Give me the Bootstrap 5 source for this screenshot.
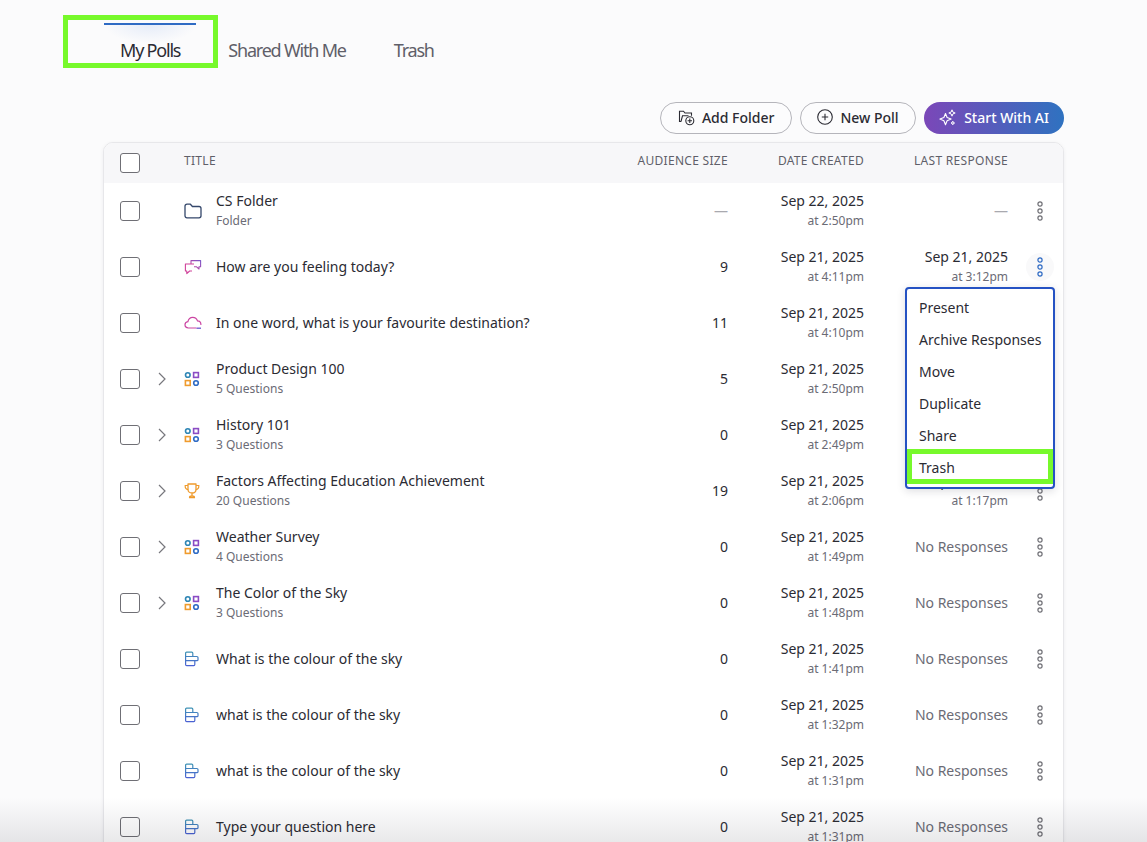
<!DOCTYPE html>
<html lang="en">
<head>
  <meta charset="UTF-8">
  <title>My Polls</title>
  <meta name="viewport" content="width=device-width, initial-scale=1.0">
  <link rel="stylesheet" href="https://cdn.jsdelivr.net/npm/bootstrap@5.3.2/dist/css/bootstrap.min.css">
  <style>
    html, body {
      height: 100%;
      overflow: hidden;
    }
    body {
      background: #fbfbfc;
      color: #2b2b33;
      font-family: "Noto Sans", "Liberation Sans", sans-serif;
      font-size: 14px;
    }
    .page-wrap {
      padding: 23px 83px 0 104px;
    }
    .tab-strip {
      height: 55px;
      gap: 16px;
    }
    .tab-link {
      padding: 12px 16px 0;
      border-top: 2px solid transparent;
      color: #5f5f69;
      font-size: 18px;
      line-height: 27px;
      letter-spacing: -1.2px;
    }
    .tab-link:hover { color: #5f5f69; }
    .tab-link.active {
      color: #2b2b33;
      border-top-color: #2f6bc4;
      background: radial-gradient(ellipse 50% 18px at 50% 0, #e6ecf8, transparent);
    }
    .note-box {
      position: absolute;
      border: 5px solid #77f92b;
      pointer-events: none;
    }
    .note-tab {
      left: -41px;
      top: -8px;
      width: 155px;
      height: 53px;
    }
    .tool-bar {
      margin-top: 24px;
      gap: 8px;
    }
    .pill-btn {
      height: 32px;
      padding: 0 16.5px 2px;
      border: 1px solid #b5b5bb;
      background: #fcfcfd;
      color: #2b2b33;
      font-size: 14px;
      font-weight: 500;
      gap: 7px;
    }
    .pill-ai {
      padding: 0 15px 2px;
      border: 0;
      color: #fff;
      background: linear-gradient(90deg, #7b47b8, #2f72c0);
      gap: 8px;
    }
    .pill-ai:hover { color: #fff; }
    .poll-card {
      margin: 8px 0 0 -1px;
      border: 1px solid #e7e7ea;
      border-radius: 10px;
      background: #fff;
      box-shadow: 0 1px 4px rgba(30, 30, 50, .06);
    }
    .poll-table {
      table-layout: fixed;
      width: 959px;
      margin: 0;
    }
    .poll-table td, .poll-table th {
      padding: 0;
      vertical-align: middle;
      border: 0;
    }
    .poll-table thead th {
      height: 40px;
      padding-bottom: 4px;
      background: #f7f7f9;
      color: #5f5f69;
      font-size: 12px;
      font-weight: 400;
      letter-spacing: .3px;
      text-transform: uppercase;
    }
    .poll-table thead th:first-child { border-top-left-radius: 9px; padding-bottom: 0; }
    .poll-table thead th:last-child { border-top-right-radius: 9px; }
    .poll-table thead th.title-head { padding-left: 33px; }
    .poll-table tbody tr { height: 56px; }
    .poll-table td { color: #2b2b33; font-size: 14px; line-height: 20px; }
    .check-box {
      display: block;
      width: 20px;
      height: 20px;
      margin: 0 0 0 16px;
      border: 1px solid #6f6f75;
      border-radius: 3px;
      background: #fff;
    }
    .sub-text {
      display: block;
      color: #6b6b75;
      font-size: 12px;
      line-height: 20px;
    }
    .poll-table td.muted-dash { color: #a9a9af; }
    .poll-table td.no-resp { color: #6b6b75; }
    .arrow-icon {
      display: block;
      margin-left: 7px;
    }
    .type-icon {
      display: block;
      margin-left: 7px;
    }
    .kebab-btn {
      display: flex;
      align-items: center;
      justify-content: center;
      width: 28px;
      height: 28px;
      margin-left: 18px;
      border-radius: 50%;
      color: #6f6f75;
    }
    .kebab-btn.open {
      background: #f9f9fa;
      color: #2f6bc4;
    }
    .row-menu {
      top: 144px;
      right: 8px;
      left: auto;
      width: 150px;
      min-width: 0;
      height: 202px;
      padding: 3px 0;
      border: 2px solid #2552c3;
      border-radius: 4px;
      box-shadow: 0 2px 8px rgba(30, 30, 50, .15);
    }
    .row-menu .dropdown-item {
      height: 32px;
      padding: 0 12px;
      color: #2b2b33;
      font-size: 14px;
      line-height: 32px;
    }
    .note-item {
      left: 0;
      right: 0;
      top: 160px;
      height: 35px;
    }
    .bottom-fade {
      position: fixed;
      left: 0;
      right: 0;
      bottom: 0;
      height: 44px;
      background: linear-gradient(#fff, #e9e9ea);
      mix-blend-mode: multiply;
      pointer-events: none;
    }
  </style>
</head>
<body>
  <svg width="0" height="0" class="position-absolute">
    <defs>
      <linearGradient id="gradChat" x1="0" y1="1" x2="1" y2="0">
        <stop offset="0" stop-color="#d0429a"/><stop offset="1" stop-color="#7a57c8"/>
      </linearGradient>
      <linearGradient id="gradBars" x1="0" y1="0" x2="0" y2="1">
        <stop offset="0" stop-color="#3f93b5"/><stop offset="1" stop-color="#4a62d2"/>
      </linearGradient>
      <symbol id="iconFolder" viewBox="0 0 18 16">
        <path d="M1 3.200C1 2 1.800 1.200 3 1.200h3.400l2 2.300H15c1.200 0 2 .8 2 2v7.300c0 1.200-.8 2-2 2H3c-1.200 0-2-.8-2-2z" fill="none" stroke="#34476b" stroke-width="1.300" stroke-linejoin="round"/>
      </symbol>
      <symbol id="iconChat" viewBox="0 0 18 16">
        <path d="M7 5V1.600h9.600v6.200h-1.600v2.200l-2.400-2.200H10" fill="none" stroke="url(#gradChat)" stroke-width="1.100" stroke-linejoin="round"/>
        <path d="M10 5H1.400v7h1.400v2.600L5.600 12H8" fill="none" stroke="#d0429a" stroke-width="1.100" stroke-linejoin="round"/>
      </symbol>
      <symbol id="iconCloud" viewBox="0 0 18 16">
        <path d="M12 13H4.400C2.400 13 1 11.500 1 9.800c0-1.600 1.200-3 2.900-3.200C4.500 4 6.500 2.400 8.700 2.400c2.300 0 4.100 1.400 4.800 3.500 1.900.1 3.400 1.600 3.400 3.500" fill="none" stroke="#cb44a2" stroke-width="1.200" stroke-linecap="round"/>
        <path d="M12.500 13.200h4.500" fill="none" stroke="#6a55cf" stroke-width="1.300"/>
      </symbol>
      <symbol id="iconApps" viewBox="0 0 16 16">
        <circle cx="3.800" cy="4" r="2.300" fill="none" stroke="#2f86b5" stroke-width="1.600"/>
        <rect x="9.600" y="1.600" width="4.800" height="4.800" fill="none" stroke="#8b4cc4" stroke-width="1.600"/>
        <rect x="1.400" y="9.600" width="4.800" height="4.800" fill="none" stroke="#ef9b2d" stroke-width="1.600"/>
        <circle cx="12" cy="12" r="2.300" fill="none" stroke="#2f6bc4" stroke-width="1.600"/>
      </symbol>
      <symbol id="iconTrophy" viewBox="0 0 16 16">
        <path d="M4 1h8v5.500C12 8.800 10.300 10 8 10S4 8.800 4 6.500zM8 10v3M5 14.600h6M5.500 14.600c0-1 1-1.600 2.500-1.600s2.500.6 2.500 1.600" fill="none" stroke="#ef9b2d" stroke-width="1.300" stroke-linejoin="round"/>
        <path d="M4 2.500H1.200c-.2 2.500 1 3.900 3 4.200M12 2.500h2.800c.2 2.500-1 3.900-3 4.200" fill="none" stroke="#ef9b2d" stroke-width="1.200"/>
      </symbol>
      <symbol id="iconBars" viewBox="0 0 16 16">
        <path d="M1.600 5.500V2.200c0-.6.400-1 1-1h5.200c.6 0 1 .4 1 1v3.300H1.600zM1.600 5.500h11.300c.7 0 1.100.4 1.100 1v2.200c0 .6-.4 1-1.100 1H1.600zM1.600 9.700h9.200v3.800c0 .7-.4 1.100-1 1.100H2.700c-.7 0-1.100-.4-1.100-1.100z" fill="none" stroke="url(#gradBars)" stroke-width="1.200" stroke-linejoin="round"/>
      </symbol>
      <symbol id="iconKebab" viewBox="0 0 6 20">
        <circle cx="3" cy="3" r="2.100" fill="none" stroke="currentColor" stroke-width="1.200"/>
        <circle cx="3" cy="10" r="2.100" fill="none" stroke="currentColor" stroke-width="1.200"/>
        <circle cx="3" cy="17" r="2.100" fill="none" stroke="currentColor" stroke-width="1.200"/>
      </symbol>
      <symbol id="iconChevron" viewBox="0 0 8 14">
        <path d="M1 1l6 6-6 6" fill="none" stroke="#77777d" stroke-width="1.200"/>
      </symbol>
    </defs>
  </svg>

  <main class="page-wrap">
    <div class="position-relative">
      <nav class="tab-strip d-flex">
        <a class="tab-link active text-decoration-none" href="#">My Polls</a>
        <a class="tab-link text-decoration-none" href="#">Shared With Me</a>
        <a class="tab-link text-decoration-none" href="#">Trash</a>
      </nav>
      <div class="note-box note-tab"></div>
    </div>

    <div class="tool-bar d-flex justify-content-end">
      <button class="btn pill-btn rounded-pill d-flex align-items-center" type="button">
        <svg width="17" height="17" viewBox="0 0 17 17"><path d="M3 12.500H1.500V2.200h4l1.500 1.800h6.500v2.800M3 12.500L4.500 6.800h6" fill="none" stroke="#2b2b33" stroke-width="1.100"/><circle cx="11.800" cy="11.800" r="4" fill="none" stroke="#2b2b33" stroke-width="1.100"/><path d="M11.800 9.600v4.400M9.600 11.800H14" stroke="#2b2b33" stroke-width="1.100"/></svg>
        Add Folder
      </button>
      <button class="btn pill-btn rounded-pill d-flex align-items-center" type="button">
        <svg width="16" height="16" viewBox="0 0 16 16"><circle cx="8" cy="8" r="7.300" fill="none" stroke="#2b2b33" stroke-width="1.100"/><path d="M8 4.800v6.400M4.800 8h6.400" stroke="#2b2b33" stroke-width="1.100"/></svg>
        New Poll
      </button>
      <button class="btn pill-btn pill-ai rounded-pill d-flex align-items-center" type="button">
        <svg width="17" height="17" viewBox="0 0 17 17"><path d="M6.500 4.500l1.600 4 4 1.600-4 1.600-1.600 4-1.600-4-4-1.600 4-1.600z" fill="none" stroke="#fff" stroke-width="1.100" stroke-linejoin="round"/><path d="M13 .8l.9 2.300 2.300.9-2.300.9-.9 2.300-.9-2.300-2.300-.9 2.300-.9zM13.800 12.200l.5 1.300 1.300.5-1.300.5-.5 1.300-.5-1.300-1.300-.5 1.300-.5z" fill="none" stroke="#fff"/></svg>
        Start With AI
      </button>
    </div>

    <div class="poll-card position-relative">
      <table class="table poll-table">
        <colgroup>
          <col style="width:47px"><col style="width:26px"><col style="width:39px"><col style="width:382px">
          <col style="width:130px"><col style="width:136px"><col style="width:144px"><col style="width:55px">
        </colgroup>
        <thead>
          <tr>
            <th><span class="check-box"></span></th>
            <th class="title-head" colspan="3">Title</th>
            <th class="text-end">Audience Size</th><th class="text-end">Date Created</th><th class="text-end">Last Response</th><th></th>
          </tr>
        </thead>
        <tbody>
          <tr>
            <td><span class="check-box"></span></td><td></td>
            <td><svg width="18" height="16" class="type-icon"><use href="#iconFolder"/></svg></td>
            <td>CS Folder<span class="sub-text">Folder</span></td>
            <td class="text-end muted-dash">—</td>
            <td class="text-end">Sep 22, 2025<span class="sub-text">at 2:50pm</span></td>
            <td class="text-end muted-dash">—</td>
            <td><span class="kebab-btn"><svg width="6" height="20"><use href="#iconKebab"/></svg></span></td>
          </tr>
          <tr>
            <td><span class="check-box"></span></td><td></td>
            <td><svg width="18" height="16" class="type-icon"><use href="#iconChat"/></svg></td>
            <td>How are you feeling today?</td>
            <td class="text-end">9</td>
            <td class="text-end">Sep 21, 2025<span class="sub-text">at 4:11pm</span></td>
            <td class="text-end">Sep 21, 2025<span class="sub-text">at 3:12pm</span></td>
            <td><span class="kebab-btn open"><svg width="6" height="20"><use href="#iconKebab"/></svg></span></td>
          </tr>
          <tr>
            <td><span class="check-box"></span></td><td></td>
            <td><svg width="18" height="16" class="type-icon"><use href="#iconCloud"/></svg></td>
            <td>In one word, what is your favourite destination?</td>
            <td class="text-end">11</td>
            <td class="text-end">Sep 21, 2025<span class="sub-text">at 4:10pm</span></td>
            <td></td><td></td>
          </tr>
          <tr>
            <td><span class="check-box"></span></td>
            <td><svg width="8" height="14" class="arrow-icon"><use href="#iconChevron"/></svg></td>
            <td><svg width="16" height="16" class="type-icon"><use href="#iconApps"/></svg></td>
            <td>Product Design 100<span class="sub-text">5 Questions</span></td>
            <td class="text-end">5</td>
            <td class="text-end">Sep 21, 2025<span class="sub-text">at 2:50pm</span></td>
            <td></td><td></td>
          </tr>
          <tr>
            <td><span class="check-box"></span></td>
            <td><svg width="8" height="14" class="arrow-icon"><use href="#iconChevron"/></svg></td>
            <td><svg width="16" height="16" class="type-icon"><use href="#iconApps"/></svg></td>
            <td>History 101<span class="sub-text">3 Questions</span></td>
            <td class="text-end">0</td>
            <td class="text-end">Sep 21, 2025<span class="sub-text">at 2:49pm</span></td>
            <td></td><td></td>
          </tr>
          <tr>
            <td><span class="check-box"></span></td>
            <td><svg width="8" height="14" class="arrow-icon"><use href="#iconChevron"/></svg></td>
            <td><svg width="16" height="16" class="type-icon"><use href="#iconTrophy"/></svg></td>
            <td>Factors Affecting Education Achievement<span class="sub-text">20 Questions</span></td>
            <td class="text-end">19</td>
            <td class="text-end">Sep 21, 2025<span class="sub-text">at 2:06pm</span></td>
            <td class="text-end">Sep 21, 2025<span class="sub-text">at 1:17pm</span></td>
            <td><span class="kebab-btn"><svg width="6" height="20"><use href="#iconKebab"/></svg></span></td>
          </tr>
          <tr>
            <td><span class="check-box"></span></td>
            <td><svg width="8" height="14" class="arrow-icon"><use href="#iconChevron"/></svg></td>
            <td><svg width="16" height="16" class="type-icon"><use href="#iconApps"/></svg></td>
            <td>Weather Survey<span class="sub-text">4 Questions</span></td>
            <td class="text-end">0</td>
            <td class="text-end">Sep 21, 2025<span class="sub-text">at 1:49pm</span></td>
            <td class="text-end no-resp">No Responses</td>
            <td><span class="kebab-btn"><svg width="6" height="20"><use href="#iconKebab"/></svg></span></td>
          </tr>
          <tr>
            <td><span class="check-box"></span></td>
            <td><svg width="8" height="14" class="arrow-icon"><use href="#iconChevron"/></svg></td>
            <td><svg width="16" height="16" class="type-icon"><use href="#iconApps"/></svg></td>
            <td>The Color of the Sky<span class="sub-text">3 Questions</span></td>
            <td class="text-end">0</td>
            <td class="text-end">Sep 21, 2025<span class="sub-text">at 1:48pm</span></td>
            <td class="text-end no-resp">No Responses</td>
            <td><span class="kebab-btn"><svg width="6" height="20"><use href="#iconKebab"/></svg></span></td>
          </tr>
          <tr>
            <td><span class="check-box"></span></td><td></td>
            <td><svg width="16" height="16" class="type-icon"><use href="#iconBars"/></svg></td>
            <td>What is the colour of the sky</td>
            <td class="text-end">0</td>
            <td class="text-end">Sep 21, 2025<span class="sub-text">at 1:41pm</span></td>
            <td class="text-end no-resp">No Responses</td>
            <td><span class="kebab-btn"><svg width="6" height="20"><use href="#iconKebab"/></svg></span></td>
          </tr>
          <tr>
            <td><span class="check-box"></span></td><td></td>
            <td><svg width="16" height="16" class="type-icon"><use href="#iconBars"/></svg></td>
            <td>what is the colour of the sky</td>
            <td class="text-end">0</td>
            <td class="text-end">Sep 21, 2025<span class="sub-text">at 1:32pm</span></td>
            <td class="text-end no-resp">No Responses</td>
            <td><span class="kebab-btn"><svg width="6" height="20"><use href="#iconKebab"/></svg></span></td>
          </tr>
          <tr>
            <td><span class="check-box"></span></td><td></td>
            <td><svg width="16" height="16" class="type-icon"><use href="#iconBars"/></svg></td>
            <td>what is the colour of the sky</td>
            <td class="text-end">0</td>
            <td class="text-end">Sep 21, 2025<span class="sub-text">at 1:31pm</span></td>
            <td class="text-end no-resp">No Responses</td>
            <td><span class="kebab-btn"><svg width="6" height="20"><use href="#iconKebab"/></svg></span></td>
          </tr>
          <tr>
            <td><span class="check-box"></span></td><td></td>
            <td><svg width="16" height="16" class="type-icon"><use href="#iconBars"/></svg></td>
            <td>Type your question here</td>
            <td class="text-end">0</td>
            <td class="text-end">Sep 21, 2025<span class="sub-text">at 1:31pm</span></td>
            <td class="text-end no-resp">No Responses</td>
            <td><span class="kebab-btn"><svg width="6" height="20"><use href="#iconKebab"/></svg></span></td>
          </tr>
        </tbody>
      </table>

      <div class="dropdown-menu show row-menu">
        <a class="dropdown-item" href="#">Present</a>
        <a class="dropdown-item" href="#">Archive Responses</a>
        <a class="dropdown-item" href="#">Move</a>
        <a class="dropdown-item" href="#">Duplicate</a>
        <a class="dropdown-item" href="#">Share</a>
        <a class="dropdown-item" href="#">Trash</a>
        <div class="note-box note-item"></div>
      </div>
    </div>
  </main>
  <div class="bottom-fade"></div>
  <script src="https://cdn.jsdelivr.net/npm/bootstrap@5.3.2/dist/js/bootstrap.bundle.min.js"></script>
</body>
</html>
